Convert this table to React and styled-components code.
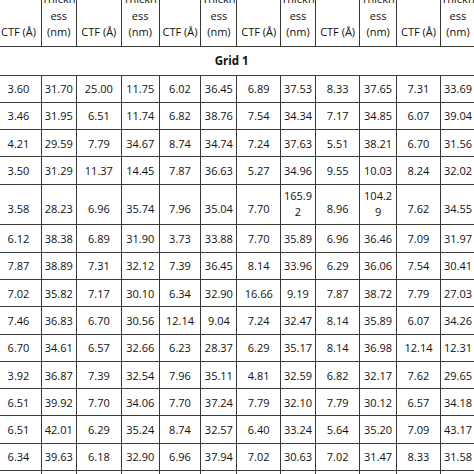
import React from "react";
import styled, { createGlobalStyle } from "styled-components";

const GlobalStyle = createGlobalStyle`
  html, body {
    margin: 0;
    padding: 0;
    background: #ffffff;
  }
  body {
    width: 474px;
    height: 474px;
    overflow: hidden;
  }
`;

// column widths measured off the picture (the table is cropped on all sides)
const widths = [45, 35.5, 44.7, 38, 41.6, 36.2, 43.5, 35, 44.3, 36.7, 44, 35];

const rows = [
  ["3.60", "31.70", "25.00", "11.75", "6.02", "36.45", "6.89", "37.53", "8.33", "37.65", "7.31", "33.69"],
  ["3.46", "31.95", "6.51", "11.74", "6.82", "38.76", "7.54", "34.34", "7.17", "34.85", "6.07", "39.04"],
  ["4.21", "29.59", "7.79", "34.67", "8.74", "34.74", "7.24", "37.63", "5.51", "38.21", "6.70", "31.56"],
  ["3.50", "31.29", "11.37", "14.45", "7.87", "36.63", "5.27", "34.96", "9.55", "10.03", "8.24", "32.02"],
  ["3.58", "28.23", "6.96", "35.74", "7.96", "35.04", "7.70", "165.9|2", "8.96", "104.2|9", "7.62", "34.55"],
  ["6.12", "38.38", "6.89", "31.90", "3.73", "33.88", "7.70", "35.89", "6.96", "36.46", "7.09", "31.97"],
  ["7.87", "38.89", "7.31", "32.12", "7.39", "36.45", "8.14", "33.96", "6.29", "36.06", "7.54", "30.41"],
  ["7.02", "35.82", "7.17", "30.10", "6.34", "32.90", "16.66", "9.19", "7.87", "38.72", "7.79", "27.03"],
  ["7.46", "36.83", "6.70", "30.56", "12.14", "9.04", "7.24", "32.47", "8.14", "35.89", "6.07", "34.26"],
  ["6.70", "34.61", "6.57", "32.66", "6.23", "28.37", "6.29", "35.17", "8.14", "36.98", "12.14", "12.31"],
  ["3.92", "36.87", "7.39", "32.54", "7.96", "35.11", "4.81", "32.59", "6.82", "32.17", "7.62", "29.65"],
  ["6.51", "39.92", "7.70", "34.06", "7.70", "37.24", "7.79", "32.10", "7.79", "30.12", "6.57", "34.18"],
  ["6.51", "42.01", "6.29", "35.24", "8.74", "32.57", "6.40", "33.24", "5.64", "35.20", "7.09", "43.17"],
  ["6.34", "39.63", "6.18", "32.90", "6.96", "37.94", "7.02", "30.63", "7.02", "31.47", "8.33", "31.58"],
  ["7.24", "36.12", "6.82", "33.45", "7.31", "35.62", "6.96", "34.08", "7.46", "33.71", "6.89", "32.84"],
];

const Frame = styled.div`
  width: 474px;
  height: 474px;
  overflow: hidden;
  background: #ffffff;
`;

const Table = styled.table`
  border-collapse: collapse;
  table-layout: fixed;
  width: 479.5px;
  margin: -12px 0 0 -4.5px;
  font-family: "Open Sans", "Liberation Sans", sans-serif;
  font-size: 11px;
  color: #111111;
`;

const HeadCell = styled.th`
  box-sizing: border-box;
  height: 58px;
  padding: 0 0 5px;
  border: 1px solid #3a3a3a;
  border-top: none;
  vertical-align: bottom;
  text-align: center;
  font-weight: 400;
  line-height: 16.5px;
  white-space: nowrap;
`;

const GroupCell = styled.td`
  box-sizing: border-box;
  height: 29px;
  padding: 0 8px 0 0;
  border: 1px solid #3a3a3a;
  text-align: center;
  vertical-align: middle;
  font-weight: 700;
  font-size: 11.5px;
`;

const Cell = styled.td`
  box-sizing: border-box;
  height: ${(p) => (p.$tall ? "40.7px" : "27.3px")};
  padding: ${(p) => (p.$tall ? "3px 0 0" : "1px 0 0")};
  border: 1px solid #3a3a3a;
  text-align: center;
  vertical-align: ${(p) => (p.$tall ? "top" : "middle")};
  line-height: 16px;
  white-space: nowrap;
`;

const Stack = styled.span`
  display: block;
  padding-top: ${(p) => (p.$push ? "13px" : "0")};
`;

const renderValue = (value, tall) => {
  if (value.includes("|")) {
    const [a, b] = value.split("|");
    return (
      <>
        {a}
        <br />
        {b}
      </>
    );
  }
  return tall ? <Stack $push>{value}</Stack> : value;
};

const App = () => {
  return (
    <>
      <GlobalStyle />
      <Frame>
        <Table>
          <colgroup>
            {widths.map((w, i) => (
              <col key={i} style={{ width: w + "px" }} />
            ))}
          </colgroup>
          <thead>
            <tr>
              {widths.map((w, i) =>
                i % 2 === 0 ? (
                  <HeadCell key={i}>CTF (Å)</HeadCell>
                ) : (
                  <HeadCell key={i}>
                    Thickn
                    <br />
                    ess
                    <br />
                    (nm)
                  </HeadCell>
                )
              )}
            </tr>
          </thead>
          <tbody>
            <tr>
              <GroupCell colSpan={12}>Grid 1</GroupCell>
            </tr>
            {rows.map((row, r) => {
              const tall = row.some((v) => v.includes("|"));
              return (
                <tr key={r}>
                  {row.map((v, c) => (
                    <Cell key={c} $tall={tall}>
                      {renderValue(v, tall)}
                    </Cell>
                  ))}
                </tr>
              );
            })}
          </tbody>
        </Table>
      </Frame>
    </>
  );
};

export default App;
